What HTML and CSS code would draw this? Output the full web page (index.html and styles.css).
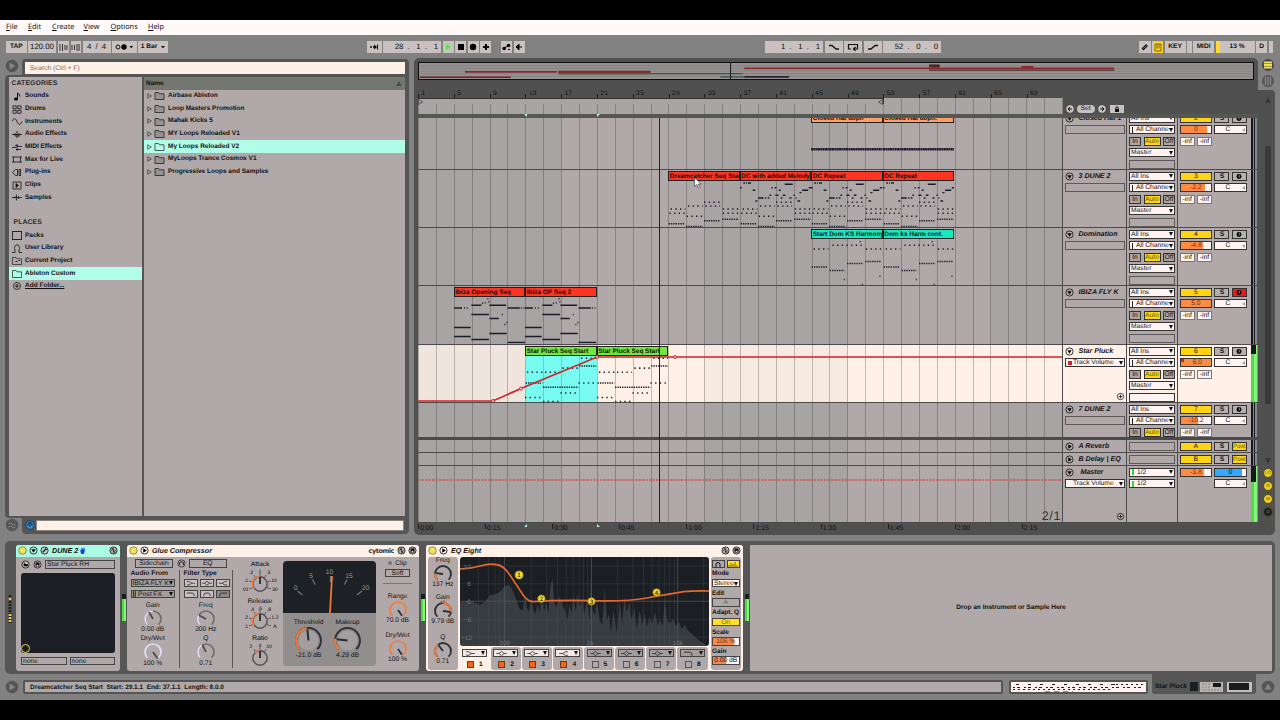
FILE: index.html
```
<!DOCTYPE html>
<html lang="en">
  <head>
    <meta charset="utf-8">
    <title>Live - Arrangement</title>
    <meta name="viewport" content="width=device-width, initial-scale=1">

    <link rel="stylesheet" href="styles.css">
  </head>
  <body>
    <!-- Shared symbols -->
    <svg class="sprite">
      <defs><path id="arc" d="M-5.66 5.66A8 8 0 1 1 5.66 5.66" pathLength="100"/></defs>
      <symbol id="open" viewBox="0 0 10 10"><circle cx="5" cy="5" r="4" fill="none" stroke="#222"/><path d="M2.6 3.6h4.8L5 7.6z"/></symbol>
      <symbol id="closed" viewBox="0 0 10 10"><circle cx="5" cy="5" r="4" fill="none" stroke="#222"/><path d="M3.6 2.6v4.8L7.6 5z"/></symbol>
      <symbol id="plus" viewBox="0 0 10 10"><circle cx="5" cy="5" r="3.5" fill="none" stroke="#222" stroke-width=".9"/><path d="M3 5h4M5 3v4" stroke="#222"/></symbol>
      <symbol id="power" viewBox="0 0 10 10"><circle cx="5" cy="5" r="4.2" fill="#f6e15c" stroke="#6a6430" stroke-width=".8"/></symbol>
      <symbol id="swap" viewBox="0 0 10 10"><circle cx="5" cy="5" r="4" fill="#b9b4b1" stroke="#222"/><path d="M2.6 5.6l2-2.4M3 3h2v2M7.4 4.4l-2 2.4M7 7H5V5" fill="none" stroke="#222" stroke-width=".9"/></symbol>
      <symbol id="wrench" viewBox="0 0 10 10"><circle cx="5" cy="5" r="4" fill="#b9d8cd" stroke="#222"/><path d="M3 7l3-3" stroke="#222" stroke-width="1.6"/><path d="M6.800 2.200L5.600 3.400l1 1 1.200-1.200" fill="none" stroke="#222"/></symbol>
      <symbol id="save" viewBox="0 0 10 10"><circle cx="5" cy="5" r="4" fill="#c9c3c0" stroke="#222"/><path d="M2.8 2.8h4.4v4.4H2.8z"/><path d="M4 5.4h2v1.4H4z" fill="#ddd"/></symbol>
      <symbol id="load" viewBox="0 0 10 10"><circle cx="5" cy="5" r="4" fill="#c9c3c0" stroke="#222"/><path d="M3 3h1.500v1.500H7.500V7H3z"/></symbol>
      <symbol id="phones" viewBox="0 0 10 10"><circle cx="5" cy="5" r="4" fill="#b9b4b1" stroke="#333"/><path d="M3 7V5a2 2 0 0 1 4 0v2" fill="none" stroke="#222" stroke-width="1.2"/></symbol>
      <symbol id="folder" viewBox="0 0 10 9"><path d="M.5 8.5v-7h3.6l.8 1.3h4.6v5.7z" fill="none" stroke="#333" stroke-width=".8"/></symbol>
      <symbol id="folder-dim" viewBox="0 0 10 9"><path d="M.5 8.5v-7h3.6l.8 1.3h4.6v5.7z" fill="#989393" stroke="#222" stroke-width=".8"/></symbol>
      <symbol id="twist" viewBox="0 0 5 6"><path d="M.7.8L4.3 3 .7 5.2z" fill="none" stroke="#333" stroke-width=".7"/></symbol>
      <symbol id="rec" viewBox="0 0 8 8"><circle cx="4" cy="4" r="2.8"/><path d="M4.4 2v2.6M3.4 4.8h1.2" stroke="#ccc" stroke-width=".7"/></symbol>
      <symbol id="bell" viewBox="0 0 12 8"><path d="M0 4h3l3-2.5L9 4h3M3 4l3 2.5L9 4" fill="none" stroke="#222" stroke-width=".9"/></symbol>
      <symbol id="low-shelf" viewBox="0 0 12 8"><path d="M1 2h3l3 2h4M1 6h3l3-2" fill="none" stroke="#222" stroke-width=".9"/></symbol>
      <symbol id="high-shelf" viewBox="0 0 12 8"><path d="M11 2H8L5 4H1M11 6H8L5 4" fill="none" stroke="#222" stroke-width=".9"/></symbol>
      <symbol id="low-pass" viewBox="0 0 12 8"><path d="M1 2.5h7q2 0 2 4" fill="none" stroke="#222"/></symbol>
      <symbol id="band-pass" viewBox="0 0 12 8"><path d="M2 6.5q0-4 2-4h4q2 0 2 4" fill="none" stroke="#222"/></symbol>
      <symbol id="high-pass" viewBox="0 0 12 8"><path d="M2 6.5q0-4 2-4h7" fill="none" stroke="#222"/></symbol>

      <!-- MIDI note patterns -->
      <symbol id="notes-dream" viewBox="0 0 214 140" preserveAspectRatio="none">
        <path class="n-sparse" d="M8 84h44M4 97h48M60 75h44M56 106h48M108 64h50M112 75h44M164 84h48M164 97h48"/>
        <path class="n-dense" d="M2 129h48M54 137h50M108 120h48M162 115h50"/>
      </symbol>
      <symbol id="notes-melody" viewBox="0 0 214 140" preserveAspectRatio="none">
        <path class="n-long" d="M10 6h5M18 6h3M24 6h9M0 20h5M38 28h8M46 60h6M54 51h17M75 51h4M83 51h5M88 43h5M94 20h4M104 20h5M106 43h9M128 43h8M122 51h5M148 51h6M116 28h6M134 10h24M160 43h4M166 51h3M172 60h8M178 35h6M186 28h18M206 20h7"/>
      </symbol>
      <symbol id="notes-dom" viewBox="0 0 214 140" preserveAspectRatio="none">
        <path class="n-sparse" d="M8 30h44M64 19h90M164 30h48"/>
        <path class="n-dense" d="M2 84h46M56 95h44M108 74h48M162 68h48"/>
        <path class="n-dot" d="M146 8h3M98 122h3M205 112h3M152 137h3"/>
      </symbol>
      <symbol id="notes-ibiza" viewBox="0 0 214 140" preserveAspectRatio="none">
        <path class="n-long" d="M0 33h24M0 92h50M0 119h50M52 25h30M52 53h53M52 128h53M106 25h50M106 65h28M106 110h52M160 33h37M160 137h54"/>
        <path class="n-dot" d="M30 33h3M38 33h3M84 19h3M92 17h3M100 5h3M103 14h3M143 53h3M151 83h3M157 77h3M200 33h3M208 33h3"/>
      </symbol>
      <symbol id="notes-star" viewBox="0 0 214 138" preserveAspectRatio="none">
        <path class="n-sparse" d="M6 48h46M60 48h44M112 36h46M168 7h46M160 80h50M0 123h46M54 135h46M106 110h46"/>
        <path class="n-dense" d="M2 80h50M54 93h106M162 30h52"/>
      </symbol>
    </svg>

    <nav class="menubar">
      <a><u>F</u>ile</a><a><u>E</u>dit</a><a><u>C</u>reate</a><a><u>V</u>iew</a><a><u>O</u>ptions</a><a><u>H</u>elp</a>
    </nav>

    <div class="app">
      <header class="toolbar">
        <div class="toolbar__group">
          <span class="btn btn--20"><b>TAP</b></span>
          <span class="btn btn--28 btn--num">120.00</span>
          <span class="btn btn--12"><svg width="9" height="7"><path d="M1 0v7M3.5 0v7M6 1v5M8 1v5" stroke="#333"/></svg></span>
          <span class="btn btn--10"><svg width="9" height="7"><path d="M1 1v5M3.5 1v5M6 0v7M8 0v7" stroke="#333"/></svg></span>
          <span class="btn btn--28 btn--num btn--sig">4 / 4</span>
          <span class="btn btn--24"><svg width="18" height="8"><circle cx="3" cy="4" r="2" fill="none" stroke="#111"/><circle cx="9" cy="4" r="2.7"/><path d="M14.5 3h3.5l-1.7 2.3z"/></svg></span>
          <span class="btn btn--30"><b>1 Bar</b><svg width="4" height="8"><path d="M0 3h4L2 5.3z"/></svg></span>
        </div>
        <div class="toolbar__group">
          <span class="btn btn--15"><svg width="10" height="8"><path d="M1 4h5" stroke="#111" stroke-width="1.5" stroke-dasharray="2 1"/><path d="M5 1.5L8 4 5 6.5zM8 1.5h1v5H8z"/></svg></span>
          <span class="btn btn--58 btn--num btn--right">28<i>.</i>1<i>.</i>1</span>
          <span class="btn btn--11"><svg width="8" height="8"><path d="M2 1l5 3-5 3z" fill="#4df03a"/></svg></span>
          <span class="btn btn--11"><svg width="8" height="8"><path d="M1 1h6v6H1z"/></svg></span>
          <span class="btn btn--11"><svg width="8" height="8"><circle cx="4" cy="4" r="3.2"/></svg></span>
          <span class="btn btn--11"><svg width="8" height="8"><path d="M1 4h6M4 1v6" stroke="#000" stroke-width="2"/></svg></span>
        </div>
        <div class="toolbar__group">
          <span class="btn btn--12"><svg width="9" height="8"><circle cx="2.2" cy="5.5" r="1.8"/><circle cx="6.5" cy="2.5" r="1.8"/><path d="M2 5l4-2M6 6.5h2" stroke="#000"/></svg></span>
          <span class="btn btn--12"><svg width="8" height="8"><path d="M4 1v6L1 4zM4 4h3" stroke="#000"/></svg></span>
        </div>
        <div class="toolbar__group">
          <span class="btn btn--58 btn--num btn--right">1<i>.</i>1<i>.</i>1</span>
          <span class="btn btn--18"><svg width="12" height="8"><path d="M1 2.5h3L8 6h3" fill="none" stroke="#111" stroke-width="1.3"/></svg></span>
          <span class="btn btn--18"><svg width="12" height="8"><path d="M4 6H1.500V1.500h9V6H7M8.500 4L6.500 6l2 2" fill="none" stroke="#111" stroke-width="1.2"/></svg></span>
          <span class="btn btn--18"><svg width="12" height="8"><path d="M1 6h3l4-3.500h3" fill="none" stroke="#111" stroke-width="1.3"/></svg></span>
          <span class="btn btn--58 btn--num btn--right">52<i>.</i>0<i>.</i>0</span>
        </div>
        <div class="toolbar__group">
          <span class="btn btn--12"><svg width="8" height="8"><path d="M1.500 6.500L6 2" stroke="#111" stroke-width="2.6"/><path d="M2.200 5.600L5.500 2.500" stroke="#bbb" stroke-width=".6"/></svg></span>
          <span class="btn btn--11"><svg width="10" height="11"><path d="M0 0h10v11H0z" fill="#ffd32e"/><path d="M2 2h6v7H2zM4 2.500v4M6 2.500v4" fill="none" stroke="#7a6310"/></svg></span>
          <span class="btn btn--21"><b>KEY</b></span>
          <span class="btn btn--4"></span>
          <span class="btn btn--21"><b>MIDI</b></span>
          <span class="btn btn--39 btn--cpu"><b>13 %</b></span>
          <span class="btn btn--11"><b>D</b></span>
          <span class="btn btn--4"></span>
        </div>
      </header>

      <div class="main">
        <!-- Browser -->
        <section class="browser">
          <div class="browser__bar">
            <svg class="round" width="14" height="14"><circle cx="7" cy="7" r="6.2"/><path d="M4.5 3.5v7l6-3.5z"/></svg>
            <div class="browser__search"><span>Search (Ctrl + F)</span></div>
          </div>
          <div class="browser__panel">
            <div class="browser__side">
              <h2>CATEGORIES</h2>
              <ul>
                <li><svg width="11" height="9"><ellipse cx="4" cy="7" rx="2" ry="1.5"/><path d="M5.5 7V1q2 1 2.500 3.500" fill="none" stroke="#111"/></svg>Sounds</li>
                <li><svg width="11" height="9" class="line"><path d="M1 .8h3.2v3H1zM5.800.800H9v3H5.800zM1 5.300h3.200v3H1zM5.800 5.300H9v3H5.800z"/></svg>Drums</li>
                <li><svg width="11" height="9" class="line"><path d="M0 4.500q2.500-6 5 0t5 0"/></svg>Instruments</li>
                <li><svg width="11" height="9" class="line"><path d="M0 4.500h10M3 3v3M5 1v7M7 3v3M3 6h5"/></svg>Audio Effects</li>
                <li><svg width="11" height="9" class="line"><path d="M0 4.500h4M5 1v7M3 2.500h3M5 3.500h5M4 6.500h5"/></svg>MIDI Effects</li>
                <li><svg width="11" height="9" class="line"><path d="M1.500 2h7v5h-7zM0 2h2M8 2h2M0 7h2M8 7h2"/></svg>Max for Live</li>
                <li><svg width="11" height="9" class="line"><path d="M.5 4.500l3-3h2v6h-2zM7 1.500h2M7 7.500h2M8.500 1v7M7 1.500v6"/></svg>Plug-ins</li>
                <li><svg width="11" height="9" class="line"><path d="M1 1h8v7H1z"/><path d="M4 2.500v4l2.500-2z" fill="#111"/></svg>Clips</li>
                <li><svg width="11" height="9" class="line"><path d="M0 4.500h10M3 3.500v2M4.500 1.500v6M6.500 3v3"/></svg>Samples</li>
              </ul>
              <h2 class="places">PLACES</h2>
              <ul>
                <li><svg width="11" height="9" class="line"><path d="M.5.500h9v8h-9zM0 .5h10M0 8.500h10"/></svg>Packs</li>
                <li><svg width="11" height="9" class="line"><path d="M0 8.500h3V7Q1.500 1 5 .8 8.500 1 7 7v1.500h3"/></svg>User Library</li>
                <li><svg width="11" height="9"><use href="#folder" width="10" height="9"/><path d="M3.500 5.500h2M6.500 4.500H8" stroke="#222"/></svg>Current Project</li>
                <li class="is-selected"><svg width="11" height="9"><use href="#folder" width="10" height="9"/></svg>Ableton Custom</li>
                <li><svg width="11" height="10"><use href="#plus" width="10" height="10"/></svg><u>Add Folder...</u></li>
              </ul>
            </div>
            <div class="browser__files">
              <div class="browser__head">Name <svg width="6" height="5"><path d="M0 5h6L3 0z" fill="#4c4c4c"/></svg></div>
              <ul>
                <li><svg class="twist"><use href="#twist"/></svg><svg class="folder"><use href="#folder-dim"/></svg>Airbase Ableton</li>
                <li><svg class="twist"><use href="#twist"/></svg><svg class="folder"><use href="#folder-dim"/></svg>Loop Masters Promotion</li>
                <li><svg class="twist"><use href="#twist"/></svg><svg class="folder"><use href="#folder-dim"/></svg>Mahak Kicks 5</li>
                <li><svg class="twist"><use href="#twist"/></svg><svg class="folder"><use href="#folder-dim"/></svg>MY Loops Reloaded V1</li>
                <li class="is-selected"><svg class="twist"><use href="#twist"/></svg><svg class="folder"><use href="#folder"/></svg>My Loops Reloaded V2</li>
                <li><svg class="twist"><use href="#twist"/></svg><svg class="folder"><use href="#folder-dim"/></svg>MyLoops Trance Cosmos V1</li>
                <li><svg class="twist"><use href="#twist"/></svg><svg class="folder"><use href="#folder-dim"/></svg>Progressive Loops and Samples</li>
              </ul>
            </div>
          </div>
          <div class="browser__bar browser__bar--foot">
            <svg class="round" width="14" height="14"><circle cx="7" cy="7" r="6.2"/><path d="M3.500 6q2-2 3.500 0t3.500 0M3.500 9q2-2 3.500 0t3.500 0" class="wave"/></svg>
            <div class="browser__preview">
              <svg width="10" height="10"><circle cx="5" cy="5" r="4.2" fill="#3d8fd0" stroke="#17405f"/><path d="M3 6V4.500a2 2 0 0 1 4 0V6M5 3v4" fill="none" stroke="#0d2c47"/></svg>
              <span></span>
            </div>
          </div>
        </section>

        <!-- Arrangement -->
        <section class="arrangement">
          <div class="arrangement__top">
            <div class="overview">
              <svg viewBox="0 0 2508 54" preserveAspectRatio="none">
                <path d="M0 9h2508M0 18h2508M0 27h2508M0 36h2508M0 45h2508" stroke="#777" stroke-width="2"/>
                <path d="M138 30h277M978 18h1113M1534 13h32M1812 13h36" stroke="#8e2a2f" stroke-width="6"/>
                <path d="M419 30h277" stroke="#7d2c2a" stroke-width="8"/>
                <path d="M2 48h274" stroke="#7c1d22" stroke-width="5"/>
                <path d="M419 37h277M696 36h278" stroke="#3d5a37" stroke-width="4"/>
                <path d="M906 47h72" stroke="#495560" stroke-width="5"/>
                <path d="M978 47h135M1534 8h32" stroke="#2c2433" stroke-width="6"/>
                <path d="M1534 24h557" stroke="#4a3033" stroke-width="4"/>
                <path d="M937 0v54" stroke="#111" stroke-width="3"/>
              </svg>
            </div>
            <svg class="view-switch" width="17" height="32">
              <circle cx="10" cy="7" r="6" fill="#4a4a4a"/><path d="M6 4.500h8M6 7h8M6 9.500h8" stroke="#f3e052" stroke-width="1.8"/>
              <circle cx="10" cy="23" r="6" fill="#555"/><path d="M7.500 19v8M10 18.500v9M12.500 19v8" stroke="#8d8d8d" stroke-width="1.2"/>
            </svg>
          </div>

          <div class="arrangement__body">
            <div class="timeline">
              <div class="timeline__head">
                <div class="ruler">
                  <ol class="ruler__bars">
                    <li>1</li><li>5</li><li>9</li><li>13</li><li>17</li><li>21</li><li>25</li><li>29</li><li>33</li>
                    <li>37</li><li>41</li><li>45</li><li>49</li><li>53</li><li>57</li><li>61</li><li>65</li><li>69</li>
                  </ol>
                  <div class="ruler__loop"><div><svg width="5" height="6"><path d="M.5.500L4.500 3 .5 5.500z"/></svg><svg width="5" height="6"><path d="M4.500.500L.5 3l4 2.500z"/></svg></div></div>
                  <div class="ruler__scrub"></div>
                </div>
                <div class="locators">
                  <svg width="8" height="8"><circle cx="4" cy="4" r="3.7"/><path d="M2 4h4M4 2L2 4l2 2" class="mark"/></svg>
                  <span>Set</span>
                  <svg width="8" height="8"><circle cx="4" cy="4" r="3.7"/><path d="M2 4h4M4 2l2 2-2 2" class="mark"/></svg>
                  <em><svg width="6" height="6"><path d="M1 3h4v3H1z" fill="#111"/><path d="M1.800 3V2a1.200 1.200 0 0 1 2.400 0v1" class="mark"/></svg></em>
                </div>
              </div>
              <div class="selection-marks">
                <svg width="645" height="4"><path d="M106 0h3v3zM179 0h3l-3 3z"/></svg>
              </div>

              <div class="tracks">
                <div class="track track--hat">
                  <div class="lane">
                    <div class="clip clip--orange at-45"><b>Closed Hat 8bph</b><svg viewBox="0 0 214 140" preserveAspectRatio="none"><path d="M0 79h214" class="n-hat"/></svg></div>
                    <div class="clip clip--orange at-53"><b>Closed Hat 8bph.</b><svg viewBox="0 0 214 140" preserveAspectRatio="none"><path d="M0 79h214" class="n-hat"/></svg></div>
                  </div>
                  <div class="track__name"><svg class="fold"><use href="#open"/></svg><b>Closed Hat 1</b><span class="field is-empty"></span></div>
                  <div class="track__io">
                    <span class="field drop">All Ins</span><span class="field drop chan">All Channe</span>
                    <span class="mon">In</span><span class="mon is-on">Auto</span><span class="mon">Off</span>
                    <span class="field drop">Master</span><span class="field is-empty"></span>
                  </div>
                  <div class="track__mix">
                    <span class="num">2</span><span class="solo">S</span><span class="arm"><svg><use href="#rec"/></svg></span>
                    <span class="vol vol--85">0</span><span class="pan">C</span>
                    <span class="inf">-inf</span><span class="inf">-inf</span>
                  </div>
                  <div class="meter"></div>
                </div>

                <div class="track">
                  <div class="lane">
                    <div class="clip clip--red at-29"><b>Dreamcatcher Seq Start</b><svg><use href="#notes-dream"/></svg></div>
                    <div class="clip clip--red at-37"><b>DC with added Melody</b><svg><use href="#notes-dream"/><use href="#notes-melody"/></svg></div>
                    <div class="clip clip--red at-45"><b>DC Repeat</b><svg><use href="#notes-dream"/><use href="#notes-melody"/></svg></div>
                    <div class="clip clip--red at-53"><b>DC Repeat</b><svg><use href="#notes-dream"/><use href="#notes-melody"/></svg></div>
                  </div>
                  <div class="track__name"><svg class="fold"><use href="#open"/></svg><b>3 DUNE 2</b><span class="field is-empty"></span></div>
                  <div class="track__io">
                    <span class="field drop">All Ins</span><span class="field drop chan">All Channe</span>
                    <span class="mon">In</span><span class="mon is-on">Auto</span><span class="mon">Off</span>
                    <span class="field drop">Master</span><span class="field is-empty"></span>
                  </div>
                  <div class="track__mix">
                    <span class="num">3</span><span class="solo">S</span><span class="arm"><svg><use href="#rec"/></svg></span>
                    <span class="vol vol--80">-2.2</span><span class="pan">C</span>
                    <span class="inf">-inf</span><span class="inf">-inf</span>
                  </div>
                  <div class="meter"></div>
                </div>

                <div class="track">
                  <div class="lane">
                    <div class="clip clip--teal at-45"><b>Start Dom KS Harmony</b><svg><use href="#notes-dom"/></svg></div>
                    <div class="clip clip--teal at-53"><b>Dom ks Harm cont.</b><svg><use href="#notes-dom"/></svg></div>
                  </div>
                  <div class="track__name"><svg class="fold"><use href="#open"/></svg><b>Domination</b><span class="field is-empty"></span></div>
                  <div class="track__io">
                    <span class="field drop">All Ins</span><span class="field drop chan">All Channe</span>
                    <span class="mon">In</span><span class="mon is-on">Auto</span><span class="mon">Off</span>
                    <span class="field drop">Master</span><span class="field is-empty"></span>
                  </div>
                  <div class="track__mix">
                    <span class="num">4</span><span class="solo">S</span><span class="arm"><svg><use href="#rec"/></svg></span>
                    <span class="vol vol--72">-4.8</span><span class="pan">C</span>
                    <span class="inf">-inf</span><span class="inf">-inf</span>
                  </div>
                  <div class="meter"></div>
                </div>

                <div class="track track--ibiza">
                  <div class="lane">
                    <div class="clip clip--red at-5"><b>Ibiza Opening Seq</b><svg><use href="#notes-ibiza"/></svg></div>
                    <div class="clip clip--red at-13"><b>Ibiza OP Seq 2</b><svg><use href="#notes-ibiza"/></svg></div>
                  </div>
                  <div class="track__name"><svg class="fold"><use href="#open"/></svg><b>IBIZA FLY K</b><span class="field is-empty"></span></div>
                  <div class="track__io">
                    <span class="field drop">All Ins</span><span class="field drop chan">All Channe</span>
                    <span class="mon">In</span><span class="mon is-on">Auto</span><span class="mon">Off</span>
                    <span class="field drop">Master</span><span class="field is-empty"></span>
                  </div>
                  <div class="track__mix">
                    <span class="num">5</span><span class="solo">S</span><span class="arm is-armed"><svg><use href="#rec"/></svg></span>
                    <span class="vol vol--100">5.0</span><span class="pan">C</span>
                    <span class="inf">-inf</span><span class="inf">-inf</span>
                  </div>
                  <div class="meter"></div>
                </div>

                <div class="track is-current">
                  <div class="lane">
                    <div class="clip clip--green is-marked at-13"><b>Star Pluck Seq Start</b><svg><use href="#notes-star"/></svg></div>
                    <div class="clip clip--green at-21"><b>Star Pluck Seq Start</b><svg><use href="#notes-star"/></svg></div>
                    <svg class="envelope" width="645" height="57">
                      <path d="M0 56H75L103 43.500 179 12H645"/>
                      <circle cx="75" cy="56" r="1.5"/><circle cx="103" cy="43.5" r="1.5"/><circle cx="179" cy="12" r="1.5"/><circle cx="257" cy="12" r="1.5"/>
                    </svg>
                  </div>
                  <div class="track__name"><svg class="fold"><use href="#open"/></svg><b>Star Pluck</b><span class="field drop auto">Track Volume</span><svg class="add"><use href="#plus"/></svg></div>
                  <div class="track__io">
                    <span class="field drop">All Ins</span><span class="field drop chan">All Channe</span>
                    <span class="mon">In</span><span class="mon is-on">Auto</span><span class="mon">Off</span>
                    <span class="field drop">Master</span><span class="field"></span>
                  </div>
                  <div class="track__mix">
                    <span class="num">6</span><span class="solo">S</span><span class="arm"><svg><use href="#rec"/></svg></span>
                    <span class="vol vol--100 is-automated">6.0</span><span class="pan">C</span>
                    <span class="inf">-inf</span><span class="inf">-inf</span>
                  </div>
                  <div class="meter meter--live"></div>
                </div>

                <div class="track track--dune">
                  <div class="lane"></div>
                  <div class="track__name"><svg class="fold"><use href="#open"/></svg><b>7 DUNE 2</b><span class="field is-empty"></span></div>
                  <div class="track__io">
                    <span class="field drop">All Ins</span><span class="field drop chan">All Channe</span>
                    <span class="mon">In</span><span class="mon is-on">Auto</span><span class="mon">Off</span>
                  </div>
                  <div class="track__mix">
                    <span class="num">7</span><span class="solo">S</span><span class="arm"><svg><use href="#rec"/></svg></span>
                    <span class="vol vol--58">-10.2</span><span class="pan">C</span>
                    <span class="inf">-inf</span><span class="inf">-inf</span>
                  </div>
                  <div class="meter"></div>
                </div>

                <div class="track track--return">
                  <div class="lane"></div>
                  <div class="track__name"><svg class="fold"><use href="#closed"/></svg><b>A Reverb</b></div>
                  <div class="track__io"><span class="field is-empty"></span></div>
                  <div class="track__mix"><span class="num">A</span><span class="solo">S</span><span class="arm post">Post</span></div>
                  <div class="meter"></div>
                </div>
                <div class="track track--return">
                  <div class="lane"></div>
                  <div class="track__name"><svg class="fold"><use href="#closed"/></svg><b>B Delay | EQ</b></div>
                  <div class="track__io"><span class="field is-empty"></span></div>
                  <div class="track__mix"><span class="num">B</span><span class="solo">S</span><span class="arm post">Post</span></div>
                  <div class="meter"></div>
                </div>

                <div class="track track--master">
                  <div class="lane"><svg class="envelope envelope--dim" width="645" height="57"><path d="M0 14H645"/></svg><span class="zoom-label">2/1</span></div>
                  <div class="track__name"><svg class="fold"><use href="#open"/></svg><b>&nbsp;Master</b><span class="field drop auto auto--off">Track Volume</span><svg class="add"><use href="#plus"/></svg></div>
                  <div class="track__io">
                    <span class="field drop out">1/2</span><span class="field drop out">1/2</span>
                  </div>
                  <div class="track__mix">
                    <span class="vol vol--75">-3.8</span><span class="cue">0</span>
                    <span class="gap"></span><span class="pan">C</span>
                  </div>
                  <div class="meter meter--live"></div>
                </div>

                <div class="playhead"></div>
                <svg class="cursor" width="8" height="12"><path d="M.5.500v9l2.200-2 1.500 3.500 1.500-.7-1.500-3.300h3z" fill="#fff" stroke="#444" stroke-width=".7"/></svg>
              </div>

              <ol class="ruler__time">
                <li>0:00</li><li>0:15</li><li>0:30</li><li>0:45</li><li>1:00</li><li>1:15</li><li>1:30</li><li>1:45</li><li>2:00</li><li>2:15</li>
              </ol>
              <div class="selection-marks selection-marks--foot">
                <svg width="645" height="4"><path d="M106 3l3-3v3zM179 0l3 3h-3z"/></svg>
              </div>
            </div>

            <div class="side-scroll">
              <svg width="8" height="6"><path d="M1 6h6L4 0z"/></svg>
              <div class="side-scroll__thumb"></div>
              <svg width="8" height="6"><path d="M1 0h6L4 6z"/></svg>
              <span>I O</span><span>R</span><span>M</span><span class="is-off">D</span>
            </div>
          </div>
        </section>
      </div>

      <!-- Device chain -->
      <section class="devices">
        <svg class="midi-in" width="4" height="30"><path d="M2 2v28" stroke="#222" stroke-width="3" stroke-dasharray="2 1"/><path d="M2 5v2M2 21v2M2 24v2M2 27v2" stroke="#f2cf3a" stroke-width="2.5"/></svg>

        <article class="device device--dune">
          <header>
            <svg><use href="#power"/></svg><svg><use href="#open"/></svg><svg><use href="#wrench"/></svg><h3>DUNE 2</h3>
            <svg class="hand" viewBox="0 0 8 8"><path d="M1 3l1.500 1V1.500l1 .2.2 1.800L4 .7h1v2.800l.8-2h.9l-.2 3.500L5.500 8h-3z" fill="#2440d8"/></svg>
            <svg class="push"><use href="#swap"/></svg>
          </header>
          <div class="dune">
            <div class="dune__preset"><svg><use href="#load"/></svg><svg><use href="#save"/></svg><span class="box">Star Pluck RH</span></div>
            <div class="dune__pad"><i></i></div>
            <div class="dune__axes"><span class="box">none</span><span class="box">none</span></div>
          </div>
        </article>
        <div class="level"></div>

        <article class="device device--glue">
          <header>
            <svg><use href="#power"/></svg><svg><use href="#closed"/></svg><h3>Glue Compressor</h3>
            <span class="brand push">cytomic</span><svg><use href="#swap"/></svg><svg><use href="#save"/></svg>
          </header>
          <div class="glue">
            <div class="glue__side">
              <div class="glue__tabs"><span class="box">Sidechain</span><svg width="9" height="9"><use href="#phones"/></svg><span class="box">EQ</span></div>
              <div class="glue__cols">
                <div class="glue__col">
                  <h4>Audio From</h4>
                  <span class="box drop">IBIZA FLY K</span>
                  <span class="box drop"><b>||</b> Post FX</span>
                  <div class="dial dial--pale"><label>Gain</label><svg viewBox="-10 -10 20 20"><use href="#arc" class="ring"/><use href="#arc" class="value" stroke-dasharray="50 100"/><path d="M0 0V-8" transform="rotate(-30)"/></svg><span>0.00 dB</span></div>
                  <div class="dial dial--pale"><label>Dry/Wet</label><svg viewBox="-10 -10 20 20"><use href="#arc" class="value"/><path d="M0 0V-8" transform="rotate(145)"/></svg><span>100 %</span></div>
                </div>
                <div class="glue__col">
                  <h4>Filter Type</h4>
                  <div class="shapes">
                    <svg><use href="#low-shelf"/></svg><svg><use href="#bell"/></svg><svg><use href="#high-shelf"/></svg>
                    <svg><use href="#low-pass"/></svg><svg><use href="#band-pass"/></svg><svg class="is-on"><use href="#high-pass"/></svg>
                  </div>
                  <div class="dial dial--pale"><label>Freq</label><svg viewBox="-10 -10 20 20"><use href="#arc" class="ring"/><use href="#arc" class="value" stroke-dasharray="27 100"/><path d="M0 0V-8" transform="rotate(-62)"/></svg><span>200 Hz</span></div>
                  <div class="dial dial--pale"><label>Q</label><svg viewBox="-10 -10 20 20"><use href="#arc" class="ring"/><use href="#arc" class="value" stroke-dasharray="40 100"/><path d="M0 0V-8" transform="rotate(-27)"/></svg><span>0.71</span></div>
                </div>
              </div>
            </div>
            <svg class="glue__steps" width="50" height="114">
              <g class="cap"><text x="27" y="9">Attack</text><text x="27" y="46">Release</text><text x="27" y="83">Ratio</text></g>
              <g class="tick-label">
                <text x="18" y="17">.3</text><text x="27" y="15.5">1</text><text x="36" y="17">3</text><text x="13" y="25">.1</text><text x="41" y="25">10</text><text x="12" y="34">.01</text><text x="42" y="34">30</text>
                <text x="19" y="54">.4</text><text x="27" y="52.5">.6</text><text x="36" y="54">.8</text><text x="13" y="62">.2</text><text x="42" y="62">1.2</text><text x="13" y="71">.1</text><text x="42" y="71">A</text>
                <text x="18" y="91">2</text><text x="27" y="89.5">4</text><text x="36" y="91">10</text>
              </g>
              <path class="ticks" d="M27 16v4M21 18l1.500 3M33 18l-1.500 3M16 24l4 1M38 24l-4 1M16 32l4-1.500M38 32l-4-1.500M27 53v4M21 55l1.500 3M33 55l-1.500 3M16 61l4 1M38 61l-4 1M16 69l4-1.500M38 69l-4-1.500M27 90v4M21 92l1.500 3M33 92l-1.500 3"/>
              <g class="dials"><circle cx="27" cy="27" r="7.2"/><circle cx="27" cy="64" r="7.2"/><circle cx="27" cy="101" r="7.2"/></g>
              <path class="hot" d="M21 31.500a7.200 7.200 0 0 1 6-11.700M21 68.500a7.200 7.200 0 0 1 6-11.700M22 96a7.200 7.200 0 0 1 5-2.200"/>
              <path class="hands" d="M27 27v-7M27 64v-7M27 101v-7"/>
            </svg>
            <div class="glue__display">
              <svg width="93" height="52">
                <g class="scale"><text x="12.5" y="29">0</text><text x="28" y="17">5</text><text x="46.5" y="13">10</text><text x="66" y="17">15</text><text x="82.5" y="29">20</text></g>
                <path d="M14.500 30l5 4M29.500 18.500l2.500 5M47.500 15v6M64 18.500l-2.500 5M79 30l-5 4" stroke="#777" stroke-width="1.2"/>
                <path d="M49 15L47 52" stroke="#f4773a" stroke-width="1.8"/>
              </svg>
              <div class="glue__pair">
                <div class="dial dial--big"><label>Threshold</label><svg viewBox="-10 -10 20 20"><circle r="6.5" class="cap"/><use href="#arc" class="ring"/><use href="#arc" class="value" stroke-dasharray="47 100"/><path d="M0 0V-7" transform="rotate(-6)"/></svg><span>-21.0 dB</span></div>
                <div class="dial dial--big"><label>Makeup</label><svg viewBox="-10 -10 20 20"><circle r="6.5" class="cap"/><use href="#arc" class="ring"/><use href="#arc" class="value" stroke-dasharray="20 100"/><path d="M0 0V-7" transform="rotate(-83)"/></svg><span>4.29 dB</span></div>
              </div>
            </div>
            <div class="glue__out">
              <label class="clip-led"><i></i> Clip</label>
              <span class="box">Soft</span>
              <hr>
              <div class="dial"><label>Range</label><svg viewBox="-10 -10 20 20"><use href="#arc" class="value"/><path d="M0 0V-7" transform="rotate(145)"/></svg><span>70.0 dB</span></div>
              <div class="dial"><label>Dry/Wet</label><svg viewBox="-10 -10 20 20"><use href="#arc" class="value"/><path d="M0 0V-7" transform="rotate(145)"/></svg><span>100 %</span></div>
            </div>
          </div>
        </article>
        <div class="level"></div>

        <article class="device device--eq">
          <header>
            <svg><use href="#power"/></svg><svg><use href="#closed"/></svg><h3>EQ Eight</h3>
            <svg class="push"><use href="#swap"/></svg><svg><use href="#save"/></svg>
          </header>
          <div class="eq">
            <div class="eq__knobs">
              <div class="dial"><label>Freq</label><svg viewBox="-10 -10 20 20"><use href="#arc" class="ring"/><use href="#arc" class="value" stroke-dasharray="18 100"/><path d="M0 0V-7" transform="rotate(-83)"/></svg><span>137 Hz</span></div>
              <div class="dial"><label>Gain</label><svg viewBox="-10 -10 20 20"><use href="#arc" class="ring"/><use href="#arc" class="value" stroke-dasharray="0 50 35 100"/><path d="M-2 -10h4L0-7z" class="notch"/><path d="M0 0V-7" transform="rotate(97)"/></svg><span>9.79 dB</span></div>
              <div class="dial"><label>Q</label><svg viewBox="-10 -10 20 20"><use href="#arc" class="ring"/><use href="#arc" class="value" stroke-dasharray="36 100"/><path d="M0 0V-7" transform="rotate(-38)"/></svg><span>0.71</span></div>
            </div>
            <div class="eq__mid">
              <svg class="eq__graph" viewBox="0 0 746 267" preserveAspectRatio="none">
                <path class="grid" d="M0 27H746M0 80H746M0 188H746M0 241H746M55 0V267M85 0V267M105 0V267M118 0V267M213 0V267M260 0V267M292 0V267M318 0V267M339 0V267M357 0V267M370 0V267M383 0V267M472 0V267M518 0V267M550 0V267M575 0V267M596 0V267M613 0V267M628 0V267M642 0V267M730 0V267"/>
                <path class="axis" d="M0 133H746M133 0V267M394 0V267M652 0V267"/>
                <path class="spectrum" d="M0 267V137L20 131 40 134 60 144 75 134 90 115 105 112 120 104 132 90 145 84 155 95 165 118 173 142 180 158 188 160 194 112 200 150 206 165 214 125 220 160 226 172 232 140 238 168 246 110 252 165 258 130 264 172 270 95 277 62 283 140 290 150 298 118 306 140 314 160 322 190 328 140 334 170 340 115 347 165 352 110 358 150 366 125 372 170 380 130 388 190 392 60 397 160 404 175 410 130 418 188 426 205 434 95 440 190 446 170 452 225 460 160 470 230 478 130 486 200 492 120 500 165 508 135 514 190 522 150 530 215 538 160 546 205 554 170 560 210 568 180 576 200 584 165 592 205 600 190 608 205 614 120 620 190 630 200 638 185 646 205 656 195 664 215 674 205 684 222 694 230 706 240 716 250 728 258 740 267z"/>
                <path class="curve" d="M0 36Q30 36 60 27T110 23Q130 25 150 55L180 100Q200 135 220 134 300 128 394 131 500 134 560 123T670 104Q700 101 746 102"/>
                <g class="point"><circle cx="177" cy="54" r="12"/><circle cx="244" cy="125" r="11"/><circle cx="394" cy="133" r="11"/><circle cx="589" cy="106" r="11"/></g>
                <g class="point-label"><text x="177" y="61">1</text><text x="244" y="132">2</text><text x="394" y="140">3</text><text x="589" y="113">4</text></g>
                <g class="eq-label"><text x="12" y="35">12</text><text x="22" y="87">6</text><text x="22" y="140">0</text><text x="12" y="196">−6</text><text x="4" y="248">−12</text><text x="118" y="264">100</text><text x="380" y="264">1k</text><text x="637" y="264">10k</text></g>
              </svg>
              <div class="eq__bands">
                <div class="band is-current"><span class="box drop"><svg><use href="#low-shelf"/></svg></span><i></i><b>1</b></div>
                <div class="band"><span class="box drop"><svg><use href="#bell"/></svg></span><i></i><b>2</b></div>
                <div class="band"><span class="box drop"><svg><use href="#bell"/></svg></span><i></i><b>3</b></div>
                <div class="band"><span class="box drop"><svg><use href="#high-shelf"/></svg></span><i></i><b>4</b></div>
                <div class="band is-off"><span class="box drop"><svg><use href="#bell"/></svg></span><i></i><b>5</b></div>
                <div class="band is-off"><span class="box drop"><svg><use href="#bell"/></svg></span><i></i><b>6</b></div>
                <div class="band is-off"><span class="box drop"><svg><use href="#bell"/></svg></span><i></i><b>7</b></div>
                <div class="band is-off"><span class="box drop"><svg><use href="#low-pass"/></svg></span><i></i><b>8</b></div>
              </div>
            </div>
            <div class="eq__opts">
              <div class="eq__icons"><span class="box"><svg width="8" height="7"><path d="M2 6.500V3.500a2 2 0 0 1 4 0v3" fill="none" stroke="#111"/></svg></span><span class="box is-yellow"><svg width="10" height="7"><path d="M1 7V4M3 7V2M5 7V3M7 7V1M9 7V4" stroke="#7a6310"/></svg></span></div>
              <h4>Mode</h4><span class="box drop box--light">Stereo</span>
              <h4>Edit</h4><span class="box box--dim">A</span>
              <h4>Adapt. Q</h4><span class="box is-yellow">On</span>
              <h4>Scale</h4><span class="box box--scale">106 %</span>
              <h4>Gain</h4><span class="box box--gain">0.00 dB</span>
            </div>
          </div>
        </article>
        <div class="level"></div>

        <div class="drop-zone">Drop an Instrument or Sample Here</div>
      </section>

      <footer class="status">
        <svg class="round" width="14" height="14"><circle cx="7" cy="7" r="6.2"/><path d="M4.500 3.500v7l6-3.500z"/></svg>
        <div class="status__text">Dreamcatcher Seq Start&nbsp; Start: 29.1.1&nbsp; End: 37.1.1&nbsp; Length: 8.0.0</div>
        <svg class="status__clip" width="139" height="14"><path d="M5 2.500h100" stroke-dasharray="3 9"/><path d="M2 5.500h132" stroke-dasharray="2 2 3 4"/><path d="M2 7.500h100M100 2.500h34" stroke-dasharray="2 3"/><path d="M34 10h28" stroke-dasharray="5 4"/></svg>
        <div class="status__chain">Star Pluck
          <svg width="65" height="12"><path d="M0 1h8v9H0z" fill="#14211f"/><path d="M10 1h23v10H10z" fill="#b9b4b1"/><path d="M23 2h8v4h-8z" fill="#15191c"/><path d="M37 1h25v10H37z" fill="#c4bfb8"/><path d="M39 2h20v7H39z" fill="#171b1d"/><path d="M12 3h9M12 6h9M12 9h19" stroke="#8a8585" stroke-dasharray="2 1"/></svg>
        </div>
        <svg class="round" width="14" height="14"><circle cx="7" cy="7" r="6.2"/><path d="M3.500 9.500h7L7 3.500z"/></svg>
      </footer>
    </div>
  </body>
</html>
```
FILE: styles.css
```
/* Base */
* {
  box-sizing: border-box;
}

body {
  background: #000;
  color: #111;
  font: 6.7px/8px "Liberation Sans", Arial, sans-serif;
  height: 720px;
  margin: 0;
  overflow: hidden;
  padding-top: 20px;
  text-rendering: geometricPrecision;
  width: 1280px;
}

svg {
  display: block;
  flex: none;
}

ul, ol, h2, h3, h4 {
  font-size: inherit;
  list-style: none;
  margin: 0;
  padding: 0;
}

i, em {
  font-style: normal;
}

.sprite {
  display: block;
  height: 0;
  position: absolute;
  width: 0;
}

.round {
  fill: #555;
}
.round path {
  fill: #858585;
}
.round .wave {
  fill: none;
  stroke: #858585;
}

/* Menu */
.menubar {
  background: #fffaf9;
  display: grid;
  font: 7.3px/15px "Noto Sans", sans-serif;
  grid-template-columns: 22px 24px 31.5px 27px 37.5px auto;
  height: 15px;
  padding-left: 6px;
}

.app {
  background: #818181;
  height: 665px;
}

/* Toolbar */
.toolbar {
  display: grid;
  grid-template-columns: 361px 133.5px 264.5px 374px auto;
  height: 23px;
  padding: 6px 0 0 6px;
}

.toolbar__group {
  display: flex;
  gap: 1.5px;
}

.btn {
  align-items: center;
  background: #c9c0c0;
  display: flex;
  flex: none;
  font-size: 6.6px;
  gap: 4px;
  height: 12px;
  justify-content: center;
}
.btn--num {
  font-size: 7.8px;
}
.btn--right {
  justify-content: flex-end;
  padding-right: 3px;
}
.btn--right i {
  width: 5px;
}
.btn--sig {
  word-spacing: 2px;
}
.btn--cpu {
  background: linear-gradient(90deg, #ffd92e 4px, #c9c0c0 4px);
  padding-left: 4px;
}
.btn--4 { width: 4.5px; }
.btn--10 { width: 10.5px; }
.btn--11 { width: 11.1px; }
.btn--12 { width: 11.5px; }
.btn--15 { width: 14.5px; }
.btn--18 { width: 18px; }
.btn--20 { width: 20.5px; }
.btn--21 { width: 21px; }
.btn--24 { width: 24.5px; }
.btn--28 { width: 28px; }
.btn--30 { width: 30px; }
.btn--39 { width: 39px; }
.btn--58 { width: 58px; }

.main {
  display: flex;
  gap: 5px;
  height: 477px;
}

/* Browser */
.browser {
  display: flex;
  flex-direction: column;
  font-size: 6.5px;
  font-weight: bold;
  padding: 1px 0 0 5px;
  width: 409px;
}

.browser__bar {
  display: flex;
  gap: 3px;
  height: 16px;
}

.browser__search,
.browser__preview {
  background: #555;
  border-radius: 4px 4px 0 0;
  flex: 1;
  padding: 3px 4px 2px 3px;
}
.browser__search span {
  background: #fff1e7;
  color: #6d6763;
  display: block;
  font-size: 6.7px;
  font-weight: normal;
  height: 11.5px;
  line-height: 13px;
  padding-left: 5px;
}

.browser__panel {
  background: #555;
  border-radius: 4px 0 0 4px;
  display: flex;
  gap: 2px;
  height: 443px;
  padding: 2px 4px;
}

.browser__side {
  background: #b1a9a9;
  padding-top: .5px;
  width: 133px;
}
.browser__side h2 {
  color: #2c2a2a;
  font-size: 6.8px;
  height: 12.5px;
  letter-spacing: .15px;
  line-height: 12px;
  padding-left: 2.5px;
}
.browser__side .places {
  height: 25px;
  line-height: 37px;
  padding-left: 4.5px;
}
.browser li {
  align-items: center;
  display: flex;
  height: 12.7px;
}
.browser__side li {
  gap: 2px;
  padding-left: 3px;
}
.browser .line {
  fill: none;
  stroke: #222;
  stroke-width: .9;
}
.browser .is-selected {
  background: #b0fde8;
}

.browser__files {
  background: #b1a9a9;
  flex: 1;
}
.browser__head {
  align-items: center;
  background: #747670;
  display: flex;
  height: 12.5px;
  justify-content: space-between;
  padding: 1px 3px 0 2px;
}
.twist {
  height: 6px;
  margin: 0 2px 0 3px;
  width: 5px;
}
.folder {
  height: 9px;
  margin-right: 3px;
  width: 11px;
}

.browser__bar--foot {
  height: 16px;
}
.browser__preview {
  border-radius: 0 0 4px 4px;
  display: flex;
  gap: 1px;
  padding: 2px 5px 3px 3px;
}
.browser__preview span {
  background: #fff1e7;
  border: 1px solid #8b8580;
  flex: 1;
}

/* Arrangement */
.arrangement {
  width: 861px;
}

.arrangement__top {
  display: flex;
  height: 32px;
}
.overview {
  background: #505050;
  border-radius: 5px 5px 0 0;
  padding: 4px 4px 0;
  width: 844px;
}
.overview svg {
  background: #979393;
  border: 1px solid #0c0c0c;
  height: 18px;
  width: 836px;
}

.arrangement__body {
  background: #505050;
  border-radius: 0 4px 5px 5px;
  display: flex;
  height: 445px;
}

.timeline {
  padding-left: 4px;
  width: 844px;
}
.timeline__head {
  display: flex;
  height: 24px;
}
.ruler {
  width: 644.5px;
}
.ruler__bars {
  display: grid;
  font-size: 6.5px;
  grid-template-columns: repeat(18, 35.8px);
  height: 7.5px;
}
.ruler__bars li {
  background: linear-gradient(#1c1c1c, #1c1c1c) 0 4px / 1px 4px no-repeat;
  letter-spacing: .3px;
  line-height: 7px;
  padding-left: 3.5px;
}
.ruler__loop,
.ruler__scrub {
  background: repeating-linear-gradient(90deg, #858181 0 1px, transparent 1px 17.89px), #aaa5a5;
  height: 6.5px;
}
.ruler__loop div {
  background: #a9a3a5;
  border: solid #333;
  border-width: 1px 1px 1px 0;
  display: flex;
  fill: none;
  height: 7px;
  justify-content: space-between;
  stroke: #333;
  stroke-width: .7;
  width: 465.5px;
}
.ruler__scrub {
  height: 10px;
}

.locators {
  align-items: center;
  display: flex;
  fill: #ccc4c4;
  gap: 3px;
  padding: 13px 0 0 3px;
}
.locators span,
.locators em {
  background: #c9c0c0;
  border-radius: 4px;
  padding: 0 4px;
}
.locators em {
  border-radius: 0;
  margin-left: 1px;
  padding: 1px 4px;
}
.locators .mark {
  fill: none;
  stroke: #111;
}

.selection-marks {
  background: #555753;
  fill: #a8fbe8;
  height: 4px;
}
.selection-marks--foot {
  background: none;
  margin-top: -11px;
}

/* Tracks */
.tracks {
  height: 405px;
  overflow: hidden;
  position: relative;
}

.track {
  background: #b1a9a9;
  border-bottom: 1.5px solid #4c4a4a;
  display: grid;
  grid-template-columns: 645px 64px 51px 72.5px 7.5px;
  height: 58px;
}
.track--hat { margin-top: -6px; }
.track--ibiza { height: 59px; }
.track--dune {
  border-bottom-width: 3px;
  height: 37px;
}
.track--return { height: 13px; }
.track--master { height: 57px; }

.track > div {
  border-right: 1.5px solid #4c4a4a;
  min-height: 0;
  min-width: 0;
  overflow: hidden;
}
.track > .track__mix {
  border: 0;
}

.lane {
  background:
    repeating-linear-gradient(90deg, rgba(60,56,56,.34) 0 1px, transparent 1px 17.89px),
    linear-gradient(90deg, #a8a4a3 143px, #b1a9a9 143px 286px, #a8a4a3 286px 430px, #b1a9a9 430px 573px, #a8a4a3 573px);
  display: grid;
  grid-template-columns: repeat(36, 17.89px);
  position: relative;
}
.is-current,
.is-current .lane {
  background-color: #fff1e7;
}
.is-current .lane {
  background-image:
    repeating-linear-gradient(90deg, rgba(60,56,56,.3) 0 1px, transparent 1px 17.89px),
    linear-gradient(90deg, #f0e5dc 143px, #fff1e7 143px 286px, #f7ebe1 286px 430px, #fff1e7 430px);
}

.clip {
  grid-row: 1;
  min-width: 0;
  padding-top: 1px;
}
.clip b {
  border: 1px solid #222;
  display: block;
  font-size: 6.45px;
  height: 10px;
  line-height: 9px;
  overflow: hidden;
  padding-left: .5px;
  white-space: nowrap;
}
.clip svg {
  height: 46.5px;
  width: 71.5px;
}
.clip path,
.n-long, .n-dot, .n-dense, .n-sparse, .n-hat {
  fill: none;
  stroke: #1b1c2b;
  stroke-width: 4.5;
}
.n-dense { stroke-dasharray: 4 3; }
.n-sparse { stroke-dasharray: 4 10; }
.clip .n-hat {
  stroke-dasharray: 6 1;
  stroke-width: 8;
}
.clip--red b { background: #ff3423; }
.clip--orange b { background: #ff9f68; }
.clip--teal b { background: #17e9c0; }
.clip--green b { background: #72e838; }
.is-marked {
  background: repeating-linear-gradient(90deg, rgba(20,120,120,.3) 0 1px, transparent 1px 17.89px), #78fbf1;
}
.at-5 { grid-column: 3 / span 4; }
.at-13 { grid-column: 7 / span 4; }
.at-21 { grid-column: 11 / span 4; }
.at-29 { grid-column: 15 / span 4; }
.at-37 { grid-column: 19 / span 4; }
.at-45 { grid-column: 23 / span 4; }
.at-53 { grid-column: 27 / span 4; }

.envelope {
  fill: none;
  left: 0;
  position: absolute;
  stroke: #d81f2a;
  stroke-width: 1.7;
  top: 0;
}
.envelope circle {
  fill: #ffd5cc;
  stroke-width: 1;
}
.envelope--dim {
  stroke: #d4565e;
  stroke-dasharray: 2.5 1;
  stroke-width: 1.3;
}
.zoom-label {
  bottom: -1px;
  color: #333;
  font: 12.5px/13px "Liberation Sans", Arial, sans-serif;
  letter-spacing: .6px;
  position: absolute;
  right: 1px;
}

.playhead {
  background: #222;
  height: 100%;
  left: 241px;
  position: absolute;
  top: 0;
  width: 1px;
}
.cursor {
  left: 276px;
  position: absolute;
  top: 59px;
}

.field {
  background: #fff4f2;
  border: 1px solid #333;
  height: 9px;
  line-height: 7.5px;
  overflow: hidden;
  padding-left: 1px;
  white-space: nowrap;
}
.field.is-empty {
  background: none;
  border-color: #5d5959;
}
.drop {
  position: relative;
}
.drop::after {
  border: solid transparent;
  border-top-color: #111;
  border-width: 4px 2.2px 0;
  content: "";
  position: absolute;
  right: 1px;
  top: 1.7px;
}

.track__name {
  align-content: start;
  display: grid;
  font-size: 7.1px;
  grid-template-columns: 12px 1fr;
  grid-template-rows: 9px 9px 1fr;
  padding: 1.5px 1.5px 0 2px;
  row-gap: 2.5px;
}
.track__name b {
  font-style: italic;
  line-height: 9px;
  padding-left: 1.5px;
  white-space: nowrap;
}
.track__name .field {
  font-size: 6.7px;
  grid-column: span 2;
}
.fold {
  height: 9px;
  width: 9px;
}
.add {
  align-self: end;
  grid-column: 2;
  height: 9px;
  justify-self: end;
  margin-bottom: 1px;
  width: 9px;
}
.track__name .auto {
  background: linear-gradient(#d81f2a, #d81f2a) 1.5px 1.5px / 4px 4px no-repeat #fff4f2;
  padding-left: 7px;
}
.track__name .auto--off {
  background: #fff4f2;
}

.track__io {
  align-content: start;
  display: grid;
  gap: 2.5px 2.5px;
  grid-auto-rows: 9px;
  grid-template-columns: 12px 17px 12px;
  padding: 1.5px 2px 0;
}
.track__io .field {
  grid-column: span 3;
}
.track__io .chan {
  padding-left: 6px;
}
.chan::before {
  border-left: 1.5px dashed #222;
  content: "";
  height: 6px;
  left: 2px;
  position: absolute;
  top: .5px;
}
.track__io .out {
  padding-left: 7px;
}
.out::before {
  background: #35d23c;
  content: "";
  height: 6px;
  left: 1.5px;
  position: absolute;
  top: .5px;
  width: 2.5px;
}

.mon,
.solo,
.arm,
.num,
.vol,
.pan,
.inf,
.cue {
  border: 1px solid #333;
  height: 9px;
  line-height: 7.5px;
  overflow: hidden;
  text-align: center;
  white-space: nowrap;
}
.mon {
  background: #aaa4a4;
}
.mon.is-on,
.num,
.post {
  background: #ffd414;
}
.mon.is-on,
.post {
  color: #6d5a08;
}

.track__mix {
  align-content: start;
  display: grid;
  gap: 2.5px 2.7px;
  grid-auto-rows: 9px;
  grid-template-columns: 14.5px 14.5px 15px 14.5px;
  padding: 1.5px 0 0 2px;
}
.num,
.vol,
.pan,
.cue,
.gap {
  grid-column: span 2;
}
.solo {
  background: #b5afaf;
  font-weight: bold;
}
.arm {
  background: #b5afaf;
}
.arm svg {
  height: 7px;
  margin: 0 auto;
  width: 8px;
}
.arm.is-armed { background: #f3141c; }
.arm.post {
  background: #ffd414;
  font-size: 6.2px;
}
.vol {
  background: linear-gradient(90deg, #ff8a42 var(--level), #fff4f2 var(--level));
  color: #5f3212;
}
.vol--100 { --level: 100%; }
.vol--85 { --level: 85%; }
.vol--80 { --level: 80%; }
.vol--75 { --level: 75%; }
.vol--72 { --level: 72%; }
.vol--58 { --level: 58%; }
.is-automated::before {
  background: #d81f2a;
  content: "";
  float: left;
  height: 3px;
  width: 3px;
}
.pan {
  background: #fff4f2;
  padding-right: 5px;
  position: relative;
}
.pan::after {
  border: solid transparent;
  border-right-color: #aaa4a4;
  border-width: 2px 3px 2px 0;
  content: "";
  position: absolute;
  right: 1px;
  top: 1.5px;
}
.inf {
  background: #fff4f2;
  border-color: #777;
}
.cue {
  background: linear-gradient(90deg, #35a8ff 88%, #fff4f2 88%);
}

.track > .meter {
  background: linear-gradient(90deg, #15181b 2px, #8d8a8a 2px 2.5px, #15181b 2.5px 4px, #868a90 4px 5.5px, #505050 5.5px);
  border-right: 0;
}
.track > .meter--live {
  background:
    linear-gradient(#15181b 9px, transparent 9px) 0 0 / 5px 100% no-repeat,
    linear-gradient(90deg, #49df43 3px, #86f37b 3px 5.5px, #8f8f8f 5.5px);
}
.track--master > .meter--live {
  background:
    linear-gradient(#15181b 16px, transparent 16px) 0 0 / 5px 100% no-repeat,
    linear-gradient(90deg, #49df43 3px, #86f37b 3px 5.5px, #8f8f8f 5.5px);
}

.ruler__time {
  display: grid;
  font-size: 6.9px;
  grid-template-columns: repeat(10, 67.1px);
  height: 12px;
  line-height: 11px;
}
.ruler__time li {
  background: linear-gradient(#1c1c1c, #1c1c1c) 0 1px / 1px 5px no-repeat;
  padding-left: 2px;
}

.side-scroll {
  align-items: center;
  display: flex;
  fill: #383838;
  flex-direction: column;
  padding: 7px 0 0 3px;
  width: 17px;
}
.side-scroll__thumb {
  background: #3a3a3a;
  flex: none;
  height: 258px;
  margin: 43px 0 54px;
  width: 6px;
}
.side-scroll span {
  background: #e8cc2c;
  border: 1px solid #574d10;
  border-radius: 50%;
  color: #6b5a08;
  flex: none;
  font-size: 4.5px;
  height: 10px;
  line-height: 8px;
  margin-bottom: 2.9px;
  text-align: center;
  white-space: nowrap;
  width: 10px;
}
.side-scroll svg + span {
  margin-top: 4px;
}
.side-scroll .is-off {
  background: #1d1d1d;
  color: #888;
}

/* Devices */
.devices {
  background: #565656;
  border-radius: 5px;
  display: flex;
  height: 133px;
  margin: 6px 5px 0;
  padding: 4px 3px 3px 3px;
}
.midi-in {
  margin: 48px 4px 0 0;
}

.device {
  background: #b1a9a9;
  border-radius: 3px;
  flex: none;
  height: 126px;
  overflow: hidden;
}
.device header {
  align-items: center;
  background: #fff1e7;
  display: flex;
  gap: 2px;
  height: 11.5px;
  padding: 0 2px;
}
.device header svg {
  height: 9px;
  width: 9px;
}
.device h3 {
  font-size: 7.15px;
  font-style: italic;
  margin-left: 1px;
}
.device header .hand {
  height: 7px;
  margin-left: -1px;
  width: 7px;
}
.device .push {
  margin-left: auto;
}
.device .brand {
  color: #3a3636;
  font: bold 6.6px/8px "DejaVu Sans", sans-serif;
  letter-spacing: -.5px;
  margin-right: 1px;
}
.device h4 {
  line-height: 8px;
  white-space: nowrap;
}

.box {
  border: 1px solid #444;
  display: block;
  height: 8.5px;
  line-height: 7px;
  overflow: hidden;
  text-align: center;
  white-space: nowrap;
}
.box.drop {
  padding-left: 1px;
  text-align: left;
}
.box.is-yellow {
  background: #ffe11f;
  color: #7a6310;
}

.level {
  background: linear-gradient(90deg, #49df43 2px, #86f37b 2px) 0 5px / 4px 22px no-repeat, #1a1c1e;
  flex: none;
  height: 27px;
  margin: 49px 1.5px 0;
  width: 4px;
}

.device--dune {
  width: 104px;
}
.device--dune header {
  background: #a9fbe3;
}
.dune {
  padding: 3.5px 5px;
}
.dune__preset {
  display: flex;
  gap: 3px;
}
.dune__preset svg {
  height: 9px;
  width: 9px;
}
.dune__preset .box {
  flex: 1;
  padding-left: 1px;
  text-align: left;
}
.dune__pad {
  align-items: flex-end;
  background: #1b1e22;
  border-radius: 3px;
  display: flex;
  height: 80px;
  margin: 4px 0 3.5px;
}
.dune__pad i {
  border: 1.7px solid #f4d24a;
  border-radius: 50%;
  height: 9px;
  width: 9px;
}
.dune__axes {
  display: grid;
  gap: 3px;
  grid-template-columns: 1fr 1fr;
}
.dune__axes .box {
  padding-left: 1px;
  text-align: left;
}

/* Dials */
.dial {
  align-items: center;
  display: flex;
  flex-direction: column;
  white-space: nowrap;
}
.dial svg {
  fill: none;
  height: 20px;
  margin: -1px 0 -2.5px;
  overflow: visible;
  stroke: #2a2a30;
  stroke-width: 1.7;
  width: 20px;
}
.dial .ring {
  stroke: #2f3038;
}
.dial .value {
  stroke: #f47b3c;
}
.dial .notch {
  fill: #f47b3c;
  stroke: #8a4420;
  stroke-width: .5;
}
.dial--pale svg {
  stroke: #4c4848;
}
.dial--pale .ring {
  stroke: #6f6b6d;
}
.dial--pale .value {
  stroke: #dfe0f5;
}
.dial--big svg {
  height: 31px;
  margin: -2px 0 -4px;
  stroke-width: 1.3;
  width: 31px;
}
.dial--big .cap {
  fill: #a39f9f;
  stroke: none;
}

/* Glue compressor */
.device--glue {
  width: 292px;
}
.glue {
  display: flex;
  height: 114px;
}
.glue__side {
  padding-top: 2.5px;
  width: 106px;
}
.glue__tabs {
  display: grid;
  gap: 3.5px;
  grid-template-columns: 38px 9px 37.5px;
  height: 11px;
  padding-left: 8px;
}
.glue__cols {
  display: grid;
  grid-template-columns: 53px 53px;
}
.glue__col {
  border-right: 1px solid #555;
  height: 98px;
  padding: 0 4px 0 3.5px;
}
.glue__col > .box {
  background: #a29c9c;
  margin-bottom: 2.5px;
}
.glue__col .dial {
  padding-top: 1.2px;
}
.glue__col h4 {
  height: 8.5px;
}
.shapes {
  display: grid;
  gap: 2.5px 2px;
  grid-template-columns: repeat(3, 14px);
  margin-bottom: 2.5px;
}
.shapes svg {
  background: #c9c1c1;
  border: 1px solid #444;
  height: 8.5px;
  width: 14px;
}
.shapes .is-on {
  background: #8b8787;
}
.glue__steps {
  text-anchor: middle;
}
.glue__steps .tick-label {
  font-size: 5px;
}
.glue__steps .dials {
  fill: none;
  stroke: #55525a;
  stroke-width: 1.5;
}
.glue__steps .ticks {
  stroke: #444;
  stroke-width: .7;
}
.glue__steps .hot {
  fill: none;
  stroke: #f47b3c;
  stroke-width: 1.5;
}
.glue__steps .hands {
  stroke: #111;
  stroke-width: 1.5;
}
.glue__display {
  background: #928e8e;
  border-radius: 4px;
  height: 105px;
  margin-top: 4px;
  overflow: hidden;
  width: 93px;
}
.glue__display > svg {
  background: #1d2126;
}
.scale {
  fill: #9a9a9a;
  text-anchor: middle;
}
.glue__pair {
  display: grid;
  grid-template-columns: 39px 39px;
  justify-content: center;
  padding: 6px 3px 0 0;
}
.glue__out {
  align-items: center;
  display: flex;
  flex: 1;
  flex-direction: column;
  padding-top: 3px;
}
.glue__out .box {
  margin-top: 1px;
  width: 24.5px;
}
.clip-led i {
  background: #777;
  border-radius: 50%;
  display: inline-block;
  height: 4px;
  margin-right: 1px;
  width: 4px;
}
.glue__out hr {
  border: 0;
  border-top: 1px solid #777;
  margin: 6px 0 9px;
  width: 29px;
}
.glue__out .dial {
  height: 41px;
}

/* EQ Eight */
.device--eq {
  background: #fff1e7;
  width: 317px;
}
.eq {
  display: flex;
  height: 113px;
  padding: 0 2px;
}
.eq__knobs {
  background: #b1a9a9;
  border-radius: 3px;
  margin-right: 2px;
  width: 29.5px;
}
.eq__knobs .dial {
  height: 40px;
}
.eq__knobs .dial:first-child {
  height: 37px;
}
.eq__knobs .dial svg {
  stroke-width: 1.9;
}
.eq__mid {
  width: 249px;
}
.eq__graph {
  background: #1b1f24;
  border-radius: 3px;
  height: 89px;
  width: 249px;
}
.eq__graph .grid {
  stroke: #2b3036;
  stroke-width: 3;
}
.eq__graph .axis {
  stroke: #43484e;
  stroke-width: 3;
}
.eq__graph .spectrum {
  fill: rgba(90,95,101,.45);
}
.eq__graph .curve {
  fill: none;
  stroke: #e8682c;
  stroke-width: 5;
}
.eq-label {
  fill: #73777c;
  font-size: 19px;
}
.point {
  fill: #f5d833;
  stroke: #9d8a1c;
  stroke-width: 2;
}
.point-label {
  font-size: 19px;
  text-anchor: middle;
}
.eq__bands {
  display: grid;
  grid-template-columns: repeat(8, 1fr);
  height: 24px;
  padding-top: 1px;
}
.band {
  background: #b1a9a9;
  border-radius: 3px;
  display: grid;
  grid-template-columns: 7px 8px;
  gap: 3px 4px;
  justify-content: center;
  margin-right: 1px;
  padding-top: 2px;
}
.band .box {
  background: #f3eae8;
  grid-column: span 2;
  margin: 0 -3px;
}
.band .box svg {
  height: 7px;
  width: 13px;
}
.band i {
  background: #f2661c;
  border: 1px solid #6f3a1c;
  height: 7px;
  margin: 0 -2px 0 2px;
}
.band b {
  line-height: 8px;
  padding-left: 3px;
}
.band.is-current {
  background: #fff1e7;
}
.band.is-off .box {
  background: #a39d9d;
}
.band.is-off i {
  background: none;
  border-color: #555;
}
.eq__opts {
  background: #b1a9a9;
  border-radius: 3px;
  flex: 1;
  margin-left: 2px;
  min-width: 0;
  padding: 3px 1.5px 0;
}
.eq__opts h4 {
  font-size: 6.5px;
  height: 8.5px;
  margin-top: 2.4px;
}
.eq__icons {
  display: grid;
  gap: 2px;
  grid-template-columns: 1fr 1fr;
}
.eq__icons svg {
  margin: 0 auto;
}
.box--light {
  background: #fff4f2;
}
.box--dim {
  color: #666;
}
.box--scale {
  background: linear-gradient(90deg, #f58a4e 82%, #fff4f2 82%);
  color: #6b3515;
}
.box--gain {
  background: linear-gradient(90deg, #f58a4e 50%, #fff4f2 50%);
}

.drop-zone {
  align-items: center;
  background: #b1a9a9;
  display: flex;
  flex: 1;
  font-size: 6.5px;
  font-weight: bold;
  justify-content: center;
  white-space: nowrap;
}

/* Status bar */
.status {
  display: flex;
  height: 26px;
  padding: 6px 5px 0;
}
.status__text,
.status__clip {
  background: #b1a9a9;
  border: 2px solid #555;
  border-radius: 2px;
  height: 14px;
}
.status__text {
  font-size: 6.45px;
  font-weight: bold;
  line-height: 11px;
  margin: 0 6px 0 4px;
  padding-left: 5px;
  width: 980px;
}
.status__clip {
  background: #fff1f0;
  stroke: #222;
}
.status__chain {
  align-items: center;
  background: #565656;
  border-radius: 0 0 3px 3px;
  display: flex;
  font-size: 6.5px;
  font-weight: bold;
  gap: 3px;
  height: 21px;
  margin: -7px 5px 0 4px;
  padding: 7px 0 0 3px;
  white-space: nowrap;
  width: 104px;
}
```
